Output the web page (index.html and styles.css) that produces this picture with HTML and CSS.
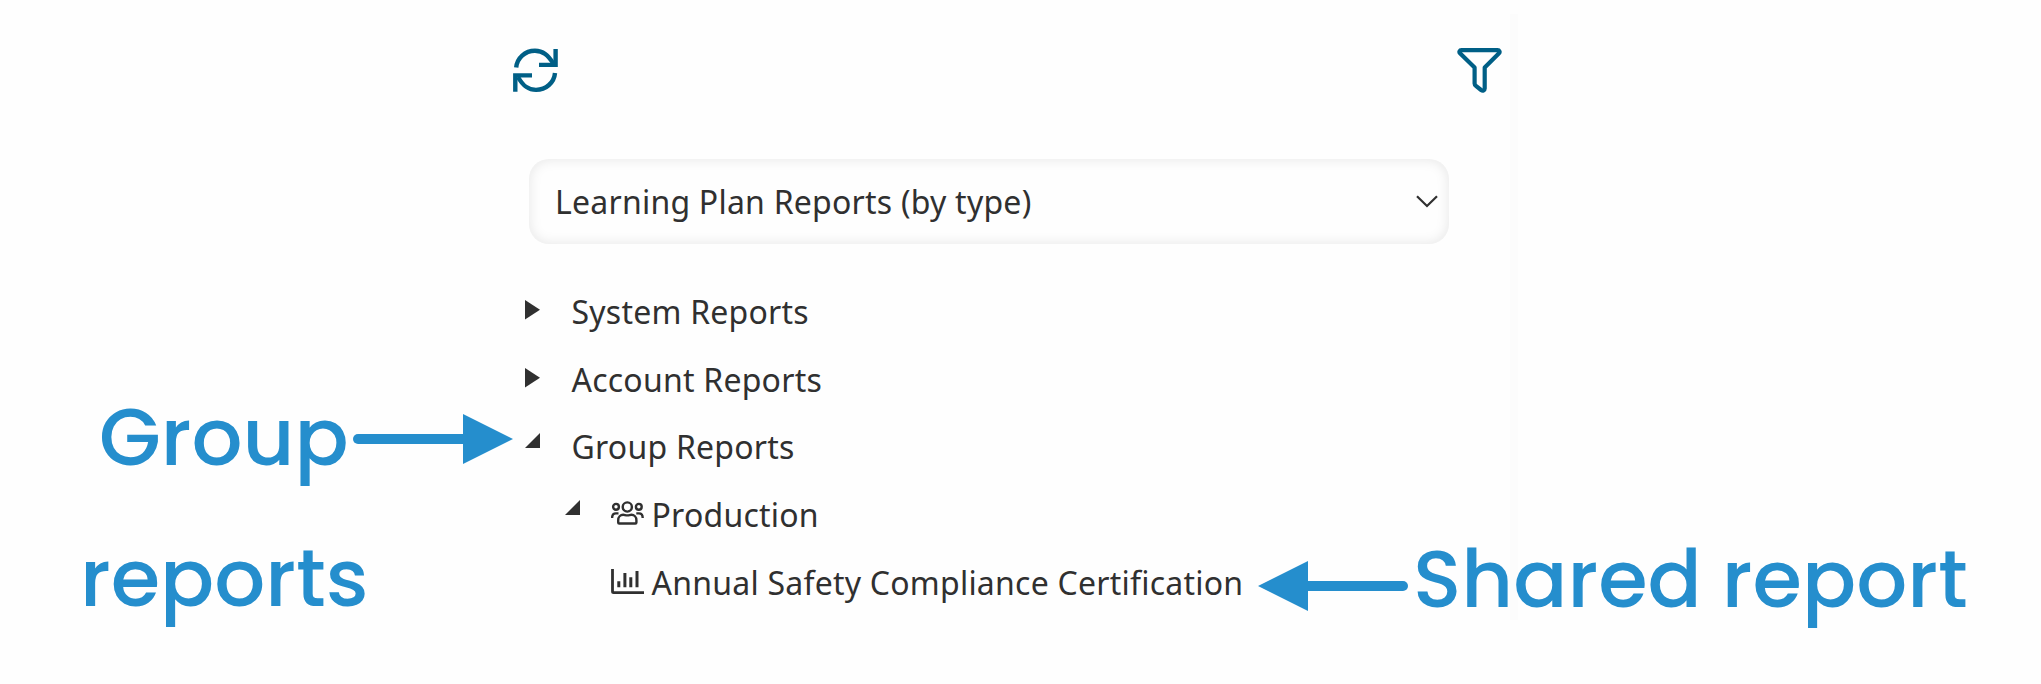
FILE: index.html
```html
<!DOCTYPE html>
<html lang="en">
<head>
<meta charset="utf-8">
<title>Reports</title>
<link rel="stylesheet" href="styles.css">
</head>
<body>
<main class="panel">
  <header class="toolbar">
    <svg class="refresh" viewBox="0 0 46 46"><g fill="none" stroke="currentColor" stroke-width="4.4"><path d="M3.200 19.500C4 10 12 2.700 22 2.700c8 0 13 4.400 18.500 13"/><path d="M42.600 1V16.900H26"/><path d="M42 25c-.8 9.500-9 16.900-19 16.900C15 41.900 10 38 5 29"/><path d="M2.300 43.700V27.400H19"/></g></svg>
    <svg class="filter" viewBox="0 0 46 46"><path d="M4.500 2.100h36c2 0 2.700 2 1.500 3.200L27.700 19.600v21c0 2-2 2.600-3.600 1.400l-5.200-4.100c-.8-.6-1.300-1.300-1.300-2.300V19.600L3 5.300C1.800 4.100 2.500 2.100 4.500 2.100z" fill="none" stroke="currentColor" stroke-width="4.200" stroke-linejoin="round"/></svg>
  </header>
  <div class="select">
    <span>Learning Plan Reports (by type)</span>
    <svg class="chevron" viewBox="0 0 22 13"><path d="M1 1.200l10 9.800L21 1.200" fill="none" stroke="currentColor" stroke-width="2.200"/></svg>
  </div>
  <ul class="tree">
    <li class="row"><svg class="caret" viewBox="0 0 15 20"><path d="M0 0l15 9.700L0 19.400z"/></svg><span>System Reports</span></li>
    <li class="row"><svg class="caret" viewBox="0 0 15 20"><path d="M0 0l15 9.700L0 19.400z"/></svg><span>Account Reports</span></li>
    <li class="row"><svg class="caret open" viewBox="0 0 15 15"><path d="M15 0v15H0z"/></svg><span>Group Reports</span></li>
    <li class="row child"><svg class="caret open" viewBox="0 0 15 15"><path d="M15 0v15H0z"/></svg>
      <svg class="icon" viewBox="0 0 33 25"><g fill="none" stroke="currentColor" stroke-width="2.400"><circle cx="16.300" cy="6" r="4.600"/><circle cx="5" cy="5.800" r="2.900"/><circle cx="27.800" cy="5.800" r="2.900"/><path d="M8.200 22.500c-.7 0-1-.4-1-1v-2.300c0-3.200 2.300-5.400 5-5.400 1.500 0 2.200.6 4.100.6s2.600-.6 4.100-.6c2.700 0 5 2.200 5 5.400v2.300c0 .6-.3 1-1 1z"/><path d="M1.100 17c0-3 1.600-4.600 3.800-4.600H7.500M31.700 17c0-3-1.600-4.600-3.800-4.600h-2.600"/></g></svg><span>Production</span></li>
    <li class="row child"><span class="caret"></span>
      <svg class="icon" viewBox="0 0 33 25"><g fill="none" stroke="currentColor"><path d="M1.500 0v22.500c0 .7.400 1.100 1.100 1.100H33" stroke-width="2.800"/><path d="M7.800 12.300v6M13.900 4v14.300M19.800 8.200v10.100M26 2v16.300" stroke-width="3"/></g></svg><span>Annual Safety Compliance Certification</span></li>
  </ul>
</main>
<div class="note note-group"><div class="group">Group</div><div class="reports">reports</div></div>
<svg class="arrow arrow-right" viewBox="0 0 160 50"><path d="M5 25h108" fill="none" stroke="currentColor" stroke-width="10" stroke-linecap="round"/><path d="M110 0l50 25-50 25z" fill="currentColor"/></svg>
<svg class="arrow arrow-left" viewBox="0 0 150 50"><path d="M145 25H45" fill="none" stroke="currentColor" stroke-width="10" stroke-linecap="round"/><path d="M50 0L0 25l50 25z" fill="currentColor"/></svg>
<div class="note note-shared"><span class="shared">Shared</span><span class="report">report</span></div>
</body>
</html>
```
FILE: styles.css
```css
body {
  margin: 0;
  height: 684px;
  overflow: hidden;
  background: #fefefe;
  color: #303030;
  font: 32px "Noto Sans", sans-serif;
  letter-spacing: 0.23px;
}
.panel {
  box-sizing: border-box;
  width: 1011px;
  height: 606px;
  margin: 14px 0 0 507px;
  border-right: 8px solid #fcfcfc;
}
.toolbar {
  display: flex;
  justify-content: space-between;
  padding: 34px 7px 0 6px;
  color: #005f86;
}
.refresh, .filter {
  display: block;
  width: 46px;
  height: 46px;
}
.select {
  box-sizing: border-box;
  display: flex;
  align-items: center;
  justify-content: space-between;
  width: 920px;
  height: 85px;
  margin: 65px 0 0 22px;
  padding: 0 11px 0 26px;
  border-radius: 20px;
  box-shadow: inset 0 0 13px #e6e6e6;
}
.chevron {
  width: 22px;
  height: 13px;
}
.tree {
  list-style: none;
  margin: 33.500px 0 0;
  padding: 0 0 0 18px;
}
.row {
  display: flex;
  align-items: center;
  height: 67.7px;
  white-space: nowrap;
}
.caret {
  flex: none;
  width: 15px;
  height: 20px;
  margin: 0 31.500px 3px 0;
  fill: currentColor;
}
.caret.open {
  height: 15px;
  margin-bottom: 13px;
}
.child {
  padding-left: 40px;
}
.child .caret {
  margin-right: 31px;
}
.icon {
  flex: none;
  width: 33px;
  height: 25px;
  margin: 0 7.500px 2px 0;
}
.note {
  position: absolute;
  color: #258ecd;
  font: 500 80px/141px "Poppins", "Inter", sans-serif;
  letter-spacing: 0;
  white-space: nowrap;
}
.note-group {
  left: 80px;
  top: 367px;
}
.group {
  margin-left: 19px;
}
.note-shared {
  left: 1413px;
  top: 509px;
  display: flex;
  gap: 20px;
}
.arrow {
  position: absolute;
  color: #258ecd;
  height: 50px;
}
.arrow-right {
  left: 353px;
  top: 414px;
  width: 160px;
}
.arrow-left {
  left: 1258px;
  top: 561px;
  width: 150px;
}
```
